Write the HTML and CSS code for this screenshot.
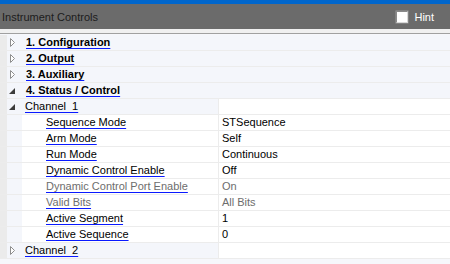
FILE: index.html
```html
<!DOCTYPE html>
<html>
<head>
<meta charset="utf-8">
<link rel="stylesheet" href="styles.css">
</head>
<body>
<div class="app">
  <div class="topbar"></div>
  <div class="header">
    <span class="title">Instrument Controls</span>
    <span class="hint"><span class="box"></span><span class="hint-text">Hint</span></span>
  </div>
  <div class="strip"></div>
  <div class="grid">
    <div class="row cat">
      <span class="gutter"><svg class="tri" width="6" height="9" viewBox="0 0 6 9"><polygon points="0.5,0.5 4.5,4.5 0.5,8.5" fill="#fff" stroke="#8e8e8e" stroke-width="1"/></svg></span>
      <span class="cat-label"><u>1. Configuration</u></span>
    </div>
    <div class="row cat">
      <span class="gutter"><svg class="tri" width="6" height="9" viewBox="0 0 6 9"><polygon points="0.5,0.5 4.5,4.5 0.5,8.5" fill="#fff" stroke="#8e8e8e" stroke-width="1"/></svg></span>
      <span class="cat-label"><u>2. Output</u></span>
    </div>
    <div class="row cat">
      <span class="gutter"><svg class="tri" width="6" height="9" viewBox="0 0 6 9"><polygon points="0.5,0.5 4.5,4.5 0.5,8.5" fill="#fff" stroke="#8e8e8e" stroke-width="1"/></svg></span>
      <span class="cat-label"><u>3. Auxiliary</u></span>
    </div>
    <div class="row cat">
      <span class="gutter"><svg class="tri open" width="6" height="6" viewBox="0 0 6 6"><polygon points="6,0 6,6 0,6" fill="#3c3c3c"/></svg></span>
      <span class="cat-label"><u>4. Status / Control</u></span>
    </div>
    <div class="row group">
      <span class="gutter"><svg class="tri open" width="6" height="6" viewBox="0 0 6 6"><polygon points="6,0 6,6 0,6" fill="#3c3c3c"/></svg></span>
      <span class="group-name"><u>Channel&nbsp;&nbsp;1</u></span>
      <span class="val"></span>
    </div>
    <div class="row prop">
      <span class="gutter"></span>
      <span class="name"><u>Sequence Mode</u></span>
      <span class="val">STSequence</span>
    </div>
    <div class="row prop">
      <span class="gutter"></span>
      <span class="name"><u>Arm Mode</u></span>
      <span class="val">Self</span>
    </div>
    <div class="row prop">
      <span class="gutter"></span>
      <span class="name"><u>Run Mode</u></span>
      <span class="val">Continuous</span>
    </div>
    <div class="row prop">
      <span class="gutter"></span>
      <span class="name"><u>Dynamic Control Enable</u></span>
      <span class="val">Off</span>
    </div>
    <div class="row prop disabled">
      <span class="gutter"></span>
      <span class="name"><u>Dynamic Control Port Enable</u></span>
      <span class="val">On</span>
    </div>
    <div class="row prop disabled">
      <span class="gutter"></span>
      <span class="name"><u>Valid Bits</u></span>
      <span class="val">All Bits</span>
    </div>
    <div class="row prop">
      <span class="gutter"></span>
      <span class="name"><u>Active Segment</u></span>
      <span class="val">1</span>
    </div>
    <div class="row prop">
      <span class="gutter"></span>
      <span class="name"><u>Active Sequence</u></span>
      <span class="val">0</span>
    </div>
    <div class="row group">
      <span class="gutter"><svg class="tri" width="6" height="9" viewBox="0 0 6 9"><polygon points="0.5,0.5 4.5,4.5 0.5,8.5" fill="#fff" stroke="#8e8e8e" stroke-width="1"/></svg></span>
      <span class="group-name"><u>Channel&nbsp;&nbsp;2</u></span>
      <span class="val"></span>
    </div>
  </div>
</div>
</body>
</html>
```

FILE: styles.css
```css
html, body {
  margin: 0;
  padding: 0;
}
body {
  width: 450px;
  height: 264px;
  overflow: hidden;
  background: #f6f7fb;
  font-family: "Liberation Sans", Arial, sans-serif;
  font-size: 11px;
  color: #000;
}
.app {
  display: flex;
  flex-direction: column;
  height: 264px;
}
.topbar {
  height: 4px;
  background: #0066cc;
}
.header {
  height: 25px;
  background: #6b6b6b;
  display: flex;
  align-items: center;
  justify-content: space-between;
  padding: 0 16px 0 2px;
}
.title {
  color: #1c1c1c;
  font-size: 11px;
}
.hint {
  display: flex;
  align-items: center;
  gap: 6px;
}
.box {
  width: 10px;
  height: 10px;
  background: #fff;
  border-top: 1px solid #8a8a8a;
  border-left: 1px solid #8a8a8a;
  border-right: 1px solid #d8d8d8;
  border-bottom: 1px solid #d8d8d8;
  box-shadow: 0 0 0 0.5px #9a9a9a;
}
.hint-text {
  color: #fff;
  font-size: 11px;
}
.strip {
  height: 4px;
  background: #f0f0f0;
  border-bottom: 1px solid #a0a0a0;
}
.grid {
  flex: 1;
  display: flex;
  flex-direction: column;
  padding-top: 1px;
  background: #f6f7fb;
}
.row {
  display: flex;
  height: 15px;
  line-height: 15px;
  border-bottom: 1px solid #ececec;
  white-space: nowrap;
}
.gutter {
  width: 22px;
  flex: none;
  position: relative;
  background: linear-gradient(to right, #ebebeb 0 7px, #f4f6fb 7px);
}
.tri {
  position: absolute;
  left: 10px;
  top: 3px;
}
.tri.open {
  left: 9px;
  top: 5px;
}
u {
  text-decoration: underline;
  text-decoration-color: #0a1aff;
  text-decoration-skip-ink: none;
  text-underline-offset: 2px;
}
.cat {
  background: #f4f6fb;
}
.cat-label {
  font-weight: bold;
  padding-left: 4px;
}
.group-name {
  width: 193px;
  flex: none;
  padding-left: 3px;
  background: #f4f6fb;
}
.name {
  width: 172px;
  flex: none;
  padding-left: 24px;
  background: #fff;
}
.val {
  flex: 1;
  background: #fff;
  border-left: 1px solid #ececec;
  padding-left: 3px;
}
.disabled .name,
.disabled .val {
  color: #6d6d6d;
}
```
